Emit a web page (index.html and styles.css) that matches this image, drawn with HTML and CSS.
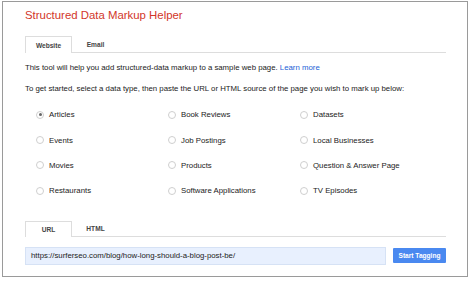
FILE: index.html
```html
<!DOCTYPE html>
<html>
<head>
<meta charset="utf-8">
<link rel="stylesheet" href="styles.css">
</head>
<body>
<div class="frame">
  <h1 class="title">Structured Data Markup Helper</h1>
  <div class="tabs">
    <div class="tab active">Website</div>
    <div class="tab">Email</div>
    <div class="tab-rest"></div>
  </div>
  <p class="intro">This tool will help you add structured-data markup to a sample web page. <a class="link">Learn more</a></p>
  <p class="intro second">To get started, select a data type, then paste the URL or HTML source of the page you wish to mark up below:</p>
  <div class="grid">
    <label class="opt"><span class="radio checked"></span>Articles</label>
    <label class="opt"><span class="radio"></span>Book Reviews</label>
    <label class="opt"><span class="radio"></span>Datasets</label>
    <label class="opt"><span class="radio"></span>Events</label>
    <label class="opt"><span class="radio"></span>Job Postings</label>
    <label class="opt"><span class="radio"></span>Local Businesses</label>
    <label class="opt"><span class="radio"></span>Movies</label>
    <label class="opt"><span class="radio"></span>Products</label>
    <label class="opt"><span class="radio"></span>Question &amp; Answer Page</label>
    <label class="opt"><span class="radio"></span>Restaurants</label>
    <label class="opt"><span class="radio"></span>Software Applications</label>
    <label class="opt"><span class="radio"></span>TV Episodes</label>
  </div>
  <div class="tabs tabs2">
    <div class="tab active">URL</div>
    <div class="tab">HTML</div>
    <div class="tab-rest"></div>
  </div>
  <div class="url-row">
    <div class="url">https://surferseo.com/blog/how-long-should-a-blog-post-be/</div>
    <div class="btn">Start Tagging</div>
  </div>
</div>
</body>
</html>
```
FILE: styles.css
```css
html, body {
  margin: 0;
  padding: 0;
  background: #fff;
}
body {
  font-family: "Liberation Sans", Arial, sans-serif;
  color: #222;
}
.frame {
  box-sizing: border-box;
  margin: 1px 0 0 2px;
  width: 466px;
  height: 276px;
  border: 1px solid #9a9a9a;
  padding: 0 0 0 22px;
}
.title {
  margin: 6px 0 0 0;
  font-size: 11.4px;
  font-weight: normal;
  color: #d2362a;
  line-height: 14px;
}
.tabs {
  display: flex;
  margin-top: 14px;
  width: 421px;
  height: 17px;
}
.tab {
  box-sizing: border-box;
  width: 47px;
  height: 17px;
  font-size: 6.6px;
  font-weight: bold;
  color: #444;
  display: flex;
  align-items: center;
  justify-content: center;
  border-bottom: 1px solid #ddd;
}
.tab.active {
  border: 1px solid #ddd;
  border-bottom: none;
  background: #fff;
}
.tab-rest {
  flex: 1;
  border-bottom: 1px solid #ddd;
}
.intro {
  margin: 10px 0 0 0;
  font-size: 7.8px;
  line-height: 10px;
  color: #222;
}
.intro.second {
  margin-top: 11px;
}
.link {
  color: #1a62d6;
}
.grid {
  display: grid;
  grid-template-columns: 132px 132px 132px;
  grid-auto-rows: 25.4px;
  margin: 8px 0 0 11px;
}
.opt {
  display: flex;
  align-items: center;
  font-size: 7.8px;
  color: #222;
}
.radio {
  box-sizing: border-box;
  width: 8px;
  height: 8px;
  border-radius: 50%;
  border: 1px solid #cfcfcf;
  margin-right: 5px;
  display: flex;
  align-items: center;
  justify-content: center;
}
.radio.checked::after {
  content: "";
  width: 3px;
  height: 3px;
  border-radius: 50%;
  background: #666;
}
.tabs2 {
  margin-top: 17px;
  height: 16px;
}
.tabs2 .tab {
  height: 16px;
}
.url-row {
  display: flex;
  align-items: center;
  margin-top: 10px;
  width: 421px;
}
.url {
  box-sizing: border-box;
  width: 361px;
  height: 18px;
  background: #e8f0fe;
  border: 1px solid #d6e2f5;
  font-size: 7.8px;
  color: #222;
  display: flex;
  align-items: center;
  padding-left: 5px;
}
.btn {
  margin-left: 7px;
  width: 53px;
  height: 15px;
  background: #4a89f0;
  color: #fff;
  font-size: 6.6px;
  font-weight: bold;
  display: flex;
  align-items: center;
  justify-content: center;
  border-radius: 1px;
}
```
